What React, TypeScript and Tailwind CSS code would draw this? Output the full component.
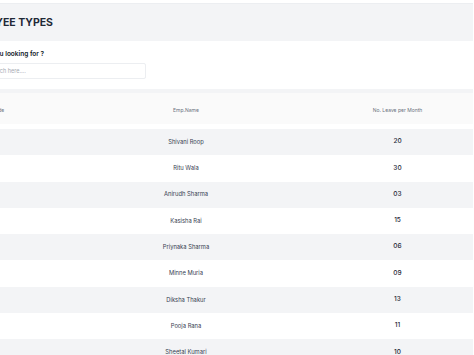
const rows = [
  { name: "Shivani Roop", leave: "20" },
  { name: "Ritu Wala", leave: "30" },
  { name: "Anirudh Sharma", leave: "03" },
  { name: "Kasisha Rai", leave: "15" },
  { name: "Priynaka Sharma", leave: "06" },
  { name: "Minne Muria", leave: "09" },
  { name: "Diksha Thakur", leave: "13" },
  { name: "Pooja Rana", leave: "11" },
  { name: "Sheetal Kumari", leave: "10" },
];

const App = () => {
  return (
    <div className="w-[474px] h-[355px] overflow-hidden bg-white font-['Inter',sans-serif]">
      <div className="ml-[-46px] w-[519px] pt-[4px]">
        <header className="bg-[#f3f4f6] h-[37px] flex items-center pl-[5px] shadow-[0_-1px_0_#eceef1]">
          <h1 className="text-[10.5px] font-bold text-[#1f2937]">EMPLOYEE TYPES</h1>
        </header>
        <div className="pt-[8px] pl-[5px]">
          <label className="block h-[10px] pl-[3px] text-[6.5px] font-semibold text-[#111827] leading-[10px]">
            What are you looking for ?
          </label>
          <input
            className="block mt-[4px] w-[187px] h-[16px] border border-[#eceef1] rounded-[2px] pl-[28px] text-[5.5px] text-[#9ca3af] placeholder:text-[#a5aab3] outline-none"
            placeholder="Search here...."
          />
        </div>
        <div className="mt-[10px] border-t-[4px] border-[#f3f4f6]">
          <div className="grid grid-cols-[76px_312px_111px] h-[31px] pt-[5px] items-center bg-[#fafafa] text-[5px] text-[#6b7280] text-center">
            <span>Emp.Code</span>
            <span>Emp.Name</span>
            <span>No. Leave per Month</span>
          </div>
          <div className="pt-[5px]">
            {rows.map((r, i) => (
              <div
                key={r.name}
                className={
                  "grid grid-cols-[76px_312px_111px] h-[26.3px] items-center text-center " +
                  (i % 2 === 0 ? "bg-[#f3f4f6]" : "bg-white")
                }
              >
                <span className="text-[5.8px] text-[#374151]">{i + 1}</span>
                <span className={"text-[5.8px] text-[#374151]" + (i === 8 ? " underline" : "")}>{r.name}</span>
                <span className="text-[6.5px] font-medium text-[#1f2937]">{r.leave}</span>
              </div>
            ))}
          </div>
        </div>
      </div>
    </div>
  );
};

export default App;
